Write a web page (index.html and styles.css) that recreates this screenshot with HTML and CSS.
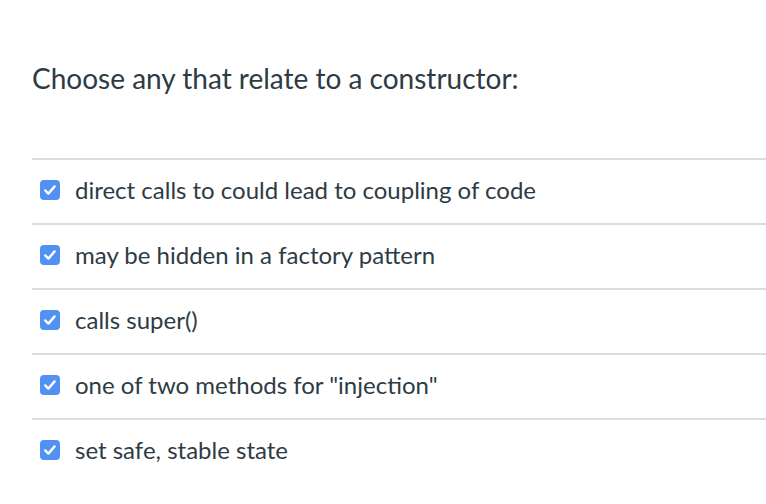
FILE: index.html
```html
<!DOCTYPE html>
<html>
<head>
<meta charset="utf-8">
<link rel="stylesheet" href="styles.css">
</head>
<body>
<div class="question">
  <h2 class="prompt">Choose any that relate to a constructor:</h2>
  <div class="answers">
    <label class="answer"><span class="check"><svg viewBox="0 0 20 20" width="20" height="20"><path d="M5.2 10.4 L8.4 13.6 L14.6 6.4" fill="none" stroke="#fff" stroke-width="2.4" stroke-linecap="round" stroke-linejoin="round"/></svg></span><span class="text">direct calls to could lead to coupling of code</span></label>
    <label class="answer"><span class="check"><svg viewBox="0 0 20 20" width="20" height="20"><path d="M5.2 10.4 L8.4 13.6 L14.6 6.4" fill="none" stroke="#fff" stroke-width="2.4" stroke-linecap="round" stroke-linejoin="round"/></svg></span><span class="text">may be hidden in a factory pattern</span></label>
    <label class="answer"><span class="check"><svg viewBox="0 0 20 20" width="20" height="20"><path d="M5.2 10.4 L8.4 13.6 L14.6 6.4" fill="none" stroke="#fff" stroke-width="2.4" stroke-linecap="round" stroke-linejoin="round"/></svg></span><span class="text">calls super()</span></label>
    <label class="answer"><span class="check"><svg viewBox="0 0 20 20" width="20" height="20"><path d="M5.2 10.4 L8.4 13.6 L14.6 6.4" fill="none" stroke="#fff" stroke-width="2.4" stroke-linecap="round" stroke-linejoin="round"/></svg></span><span class="text">one of two methods for "injection"</span></label>
    <label class="answer"><span class="check"><svg viewBox="0 0 20 20" width="20" height="20"><path d="M5.2 10.4 L8.4 13.6 L14.6 6.4" fill="none" stroke="#fff" stroke-width="2.4" stroke-linecap="round" stroke-linejoin="round"/></svg></span><span class="text">set safe, stable state</span></label>
  </div>
</div>
</body>
</html>
```
FILE: styles.css
```css
html, body {
  margin: 0;
  padding: 0;
  background: #fff;
}
body {
  font-family: Lato, "Liberation Sans", sans-serif;
  color: #2d3b45;
}
.question {
  padding: 60px 0 0 32px;
}
.prompt {
  margin: 0;
  font-size: 28px;
  font-weight: 400;
  line-height: 36px;
}
.answers {
  margin-top: 62px;
  display: flex;
  flex-direction: column;
}
.answer {
  display: flex;
  align-items: center;
  gap: 15px;
  height: 59px;
  padding-bottom: 4px;
  border-top: 2px solid #dcdcdc;
  padding-left: 8px;
  font-size: 24px;
}
.text {
  line-height: 30px;
}
.check {
  width: 20px;
  height: 20px;
  border-radius: 4px;
  background: #5191f4;
  display: flex;
  align-items: center;
  justify-content: center;
}
.check svg {
  display: block;
}
```
